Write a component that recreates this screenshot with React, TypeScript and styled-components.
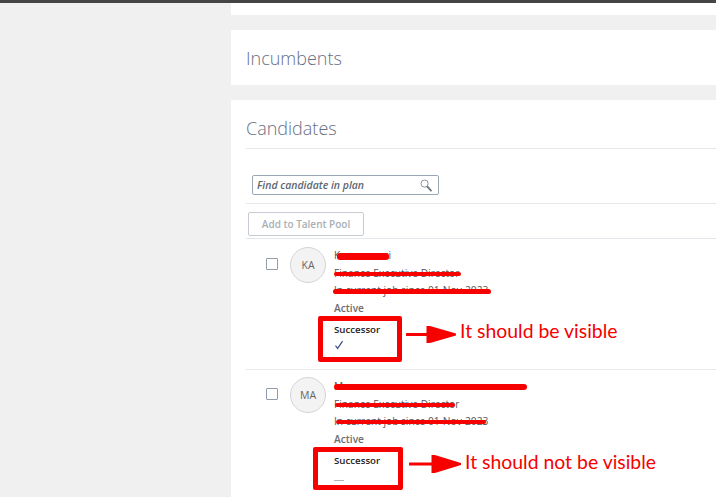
import React from 'react';
import styled, { createGlobalStyle } from 'styled-components';

interface Scribble {
  left: number;
  width: number;
  thick: number;
}

interface Candidate {
  initials: string;
  name: string;
  nameMark: Scribble;
  titleMark: Scribble;
  sinceMark: Scribble;
  successor: boolean;
  note: string;
}

const candidates: Candidate[] = [
  {
    initials: 'KA',
    name: 'Kaxxxxxxxxi',
    nameMark: { left: 3, width: 52, thick: 7 },
    titleMark: { left: 0, width: 127, thick: 4 },
    sinceMark: { left: -1, width: 158, thick: 5 },
    successor: true,
    note: 'It should be visible',
  },
  {
    initials: 'MA',
    name: 'Maxxxxxxx xxxxx xxxxxxx xxxxxxxxxx',
    nameMark: { left: 0, width: 193, thick: 6 },
    titleMark: { left: 1, width: 120, thick: 4 },
    sinceMark: { left: 2, width: 150, thick: 4 },
    successor: false,
    note: 'It should not be visible',
  },
];

const GlobalStyle = createGlobalStyle`
  html, body {
    margin: 0;
    padding: 0;
    background: #f0f0f0;
  }

  body {
    font-family: "Open Sans", "Noto Sans", sans-serif;
  }
`;

const Page = styled.div`
  width: 716px;
  height: 497px;
  overflow: hidden;
  display: flex;
  flex-direction: column;
  background: #f0f0f0;
`;

const TopBar = styled.div`
  height: 3px;
  flex-shrink: 0;
  background: #454545;
`;

const Main = styled.div`
  flex: 1;
  padding-left: 231px;
  display: flex;
  flex-direction: column;
  gap: 15px;
`;

const Stub = styled.div`
  height: 12px;
  background: #fff;
`;

const Card = styled.section`
  background: #fff;
  padding: 0 0 0 15px;
`;

const Heading = styled.h2<{ $ruled?: boolean }>`
  margin: 0;
  height: ${props => (props.$ruled ? '40px' : '55px')};
  padding-top: ${props => (props.$ruled ? '8px' : '0')};
  display: flex;
  align-items: center;
  font-size: 18px;
  font-weight: 300;
  color: #667085;
  border-bottom: ${props => (props.$ruled ? '1px solid #e4e8ec' : 'none')};
`;

const SearchRow = styled.div`
  height: 55px;
  padding: 26px 0 0 6px;
  box-sizing: border-box;
  border-bottom: 1px solid #e4e8ec;
`;

const SearchBox = styled.div`
  width: 187px;
  height: 20px;
  box-sizing: border-box;
  padding: 0 6px 0 4px;
  display: flex;
  align-items: center;
  justify-content: space-between;
  border: 1px solid #9aa8b5;
  border-radius: 2px;
  font-size: 10.5px;
  font-style: italic;
  font-weight: 600;
  color: #5d6670;
`;

const Toolbar = styled.div`
  height: 35px;
  padding: 7px 0 0 2px;
  box-sizing: border-box;
  border-bottom: 1px solid #e4e8ec;
`;

const PoolButton = styled.button`
  width: 116px;
  height: 24px;
  padding: 0;
  background: #fff;
  border: 1px solid #c6ccd2;
  border-radius: 2px;
  font-family: inherit;
  font-size: 10px;
  font-weight: 600;
  color: #a9afb5;
`;

const Row = styled.div`
  position: relative;
  height: 131px;
  box-sizing: border-box;
  padding: 8px 0 0 20px;
  display: flex;
  align-items: flex-start;
  border-bottom: 1px solid #e9e9e9;

  &:last-child {
    border-bottom: none;
    padding-top: 7px;
  }
`;

const Check = styled.span`
  width: 12px;
  height: 12px;
  margin: 11px 12px 0 0;
  flex-shrink: 0;
  border: 1px solid #8f9daa;
  border-radius: 1px;
  box-sizing: border-box;
`;

const Avatar = styled.div`
  width: 36px;
  height: 36px;
  margin-right: 8px;
  flex-shrink: 0;
  box-sizing: border-box;
  display: flex;
  align-items: center;
  justify-content: center;
  border: 1px solid #d4d4d4;
  border-radius: 50%;
  background: #f3f3f3;
  font-size: 10.5px;
  color: #666;
`;

const Details = styled.div`
  display: flex;
  flex-direction: column;

  ${Row}:last-child & {
    padding-top: 1px;
  }
`;

const Line = styled.div<{ $strong?: boolean }>`
  position: relative;
  height: 17.5px;
  line-height: 17.5px;
  white-space: nowrap;
  font-size: 10.2px;
  font-weight: ${props => (props.$strong ? 600 : 400)};
  color: ${props => (props.$strong ? '#6e6e6e' : '#555')};
`;

const Mark = styled.span<{ $left: number; $width: number; $thick: number }>`
  position: absolute;
  left: ${props => props.$left}px;
  top: ${props => 9 - props.$thick / 2}px;
  width: ${props => props.$width}px;
  height: ${props => props.$thick}px;
  border-radius: 3px;
  background: #f60000;
`;

const Field = styled.div`
  margin-top: 6px;
  display: flex;
  flex-direction: column;
`;

const FieldLabel = styled.div`
  font-size: 9.7px;
  line-height: 14px;
  font-weight: 600;
  color: #222;
`;

const FieldValue = styled.div`
  height: 16px;
  display: flex;
  align-items: center;
`;

const Dash = styled.span`
  width: 10px;
  height: 1px;
  margin-top: 9px;
  background: #b5b5b5;
`;

const Callout = styled.div<{ $top: number; $left: number; $width: number; $height: number }>`
  position: absolute;
  top: ${props => props.$top}px;
  left: ${props => props.$left}px;
  width: ${props => props.$width}px;
  height: ${props => props.$height}px;
  box-sizing: border-box;
  border: 5px solid #f60000;
  border-radius: 2px;
`;

const Arrow = styled.svg<{ $top: number; $left: number }>`
  position: absolute;
  top: ${props => props.$top}px;
  left: ${props => props.$left}px;
`;

const Note = styled.div<{ $top: number; $left: number }>`
  position: absolute;
  top: ${props => props.$top}px;
  left: ${props => props.$left}px;
  font-family: Lato, "Open Sans", sans-serif;
  font-size: 19.4px;
  line-height: 26px;
  white-space: nowrap;
  color: #f60000;
`;

const SearchIcon = () => (
  <svg width="12" height="13" viewBox="0 0 12 13" fill="none">
    <circle cx="4.6" cy="4.6" r="3.6" stroke="#8c959e" strokeWidth="1" />
    <path d="M7.4 7.6 L11 11.6" stroke="#6f7880" strokeWidth="1.8" strokeLinecap="round" />
  </svg>
);

const CheckIcon = () => (
  <svg width="10" height="10" viewBox="0 0 10 10" fill="none">
    <path d="M1.5 5.6 L3.6 8.4 L8.6 1.2" stroke="#3e4f8c" strokeWidth="1.2" />
  </svg>
);

const App: React.FC = () => {
  return (
    <Page>
      <GlobalStyle />
      <TopBar />
      <Main>
        <Stub />
        <Card>
          <Heading>Incumbents</Heading>
        </Card>
        <Card>
          <Heading $ruled>Candidates</Heading>
          <SearchRow>
            <SearchBox>
              Find candidate in plan
              <SearchIcon />
            </SearchBox>
          </SearchRow>
          <Toolbar>
            <PoolButton>Add to Talent Pool</PoolButton>
          </Toolbar>
          {candidates.map((candidate) => (
            <Row key={candidate.initials}>
              <Check />
              <Avatar>{candidate.initials}</Avatar>
              <Details>
                <Line>
                  {candidate.name}
                  <Mark $left={candidate.nameMark.left} $width={candidate.nameMark.width} $thick={candidate.nameMark.thick} />
                </Line>
                <Line>
                  Finance Executive Director
                  <Mark $left={candidate.titleMark.left} $width={candidate.titleMark.width} $thick={candidate.titleMark.thick} />
                </Line>
                <Line>
                  In current job since 01-Nov-2023
                  <Mark $left={candidate.sinceMark.left} $width={candidate.sinceMark.width} $thick={candidate.sinceMark.thick} />
                </Line>
                <Line $strong>Active</Line>
                <Field>
                  <FieldLabel>Successor</FieldLabel>
                  <FieldValue>{candidate.successor ? <CheckIcon /> : <Dash />}</FieldValue>
                </Field>
              </Details>
              {candidate.successor ? (
                <>
                  <Callout $top={77} $left={72} $width={84} $height={46} />
                  <Arrow $top={87} $left={160} width="50" height="17" viewBox="0 0 50 17">
                    <path d="M1 8.5 H24 M22 1 L48 8.5 L22 16 Z" stroke="#f60000" strokeWidth="3" fill="#f60000" strokeLinecap="round" />
                  </Arrow>
                  <Note $top={79} $left={214}>{candidate.note}</Note>
                </>
              ) : (
                <>
                  <Callout $top={77} $left={67} $width={90} $height={43} />
                  <Arrow $top={85} $left={163} width="52" height="18" viewBox="0 0 52 18">
                    <path d="M1 9 H26 M24 1 L50 9 L24 17 Z" stroke="#f60000" strokeWidth="3" fill="#f60000" strokeLinecap="round" />
                  </Arrow>
                  <Note $top={79} $left={219}>{candidate.note}</Note>
                </>
              )}
            </Row>
          ))}
        </Card>
      </Main>
    </Page>
  );
};

export default App;
